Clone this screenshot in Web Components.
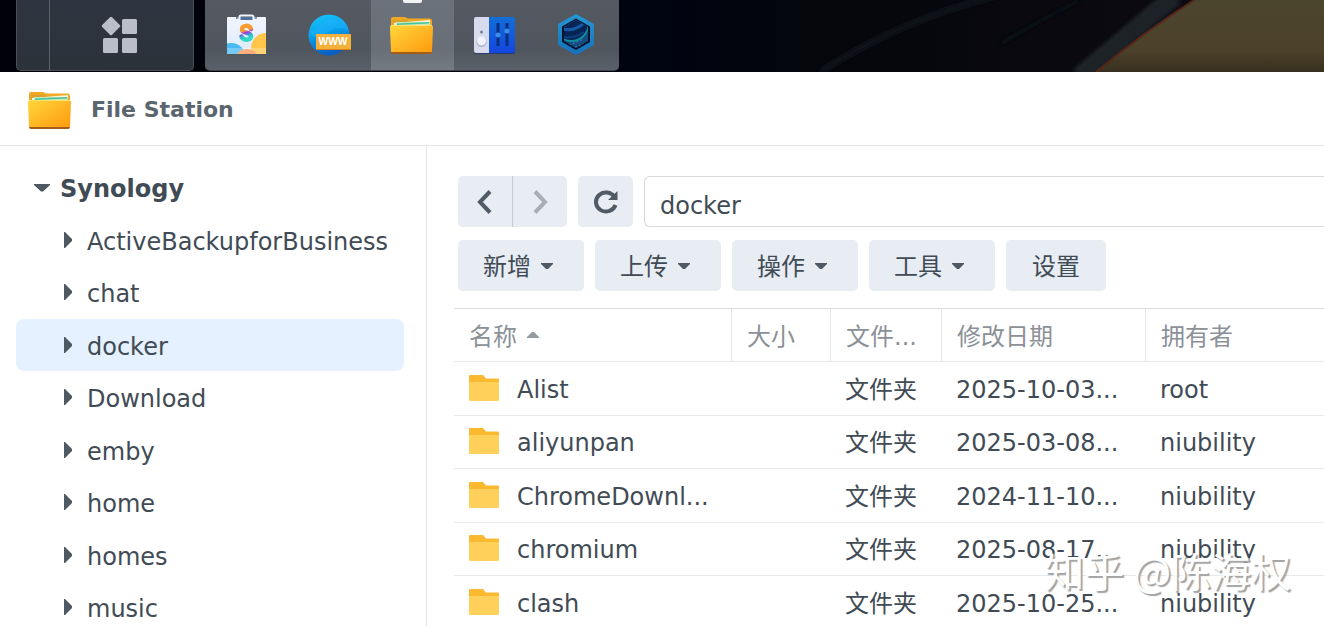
<!DOCTYPE html>
<html lang="zh-CN">
<head>
<meta charset="utf-8">
<title>File Station</title>
<style>
html, body { margin: 0; height: 100%; }
body { font: 24px/32px "DejaVu Sans", "Noto Sans CJK SC", sans-serif; color: #414b55; background: #fff; overflow: hidden; }
</style>
</head>
<body>
<fs-desktop>
  <fs-taskbar slot="taskbar"></fs-taskbar>
  <fs-titlebar slot="title">File Station</fs-titlebar>
  <fs-tree slot="side" label="Synology">
    <fs-tree-item>ActiveBackupforBusiness</fs-tree-item>
    <fs-tree-item>chat</fs-tree-item>
    <fs-tree-item selected>docker</fs-tree-item>
    <fs-tree-item>Download</fs-tree-item>
    <fs-tree-item>emby</fs-tree-item>
    <fs-tree-item>home</fs-tree-item>
    <fs-tree-item>homes</fs-tree-item>
    <fs-tree-item>music</fs-tree-item>
  </fs-tree>
  <fs-pathbar path="docker"></fs-pathbar>
  <fs-toolbar>
    <fs-button menu>新增</fs-button>
    <fs-button menu>上传</fs-button>
    <fs-button menu>操作</fs-button>
    <fs-button menu>工具</fs-button>
    <fs-button>设置</fs-button>
  </fs-toolbar>
  <fs-file-table></fs-file-table>
  <fs-watermark slot="overlay">知乎 @陈海权</fs-watermark>
</fs-desktop>

<script>
const define = (name, html, setup) => {
  const template = document.createElement('template');
  template.innerHTML = html;
  customElements.define(name, class extends HTMLElement {
    constructor() {
      super();
      this.attachShadow({ mode: 'open' }).append(template.content.cloneNode(true));
    }
    connectedCallback() { if (setup) setup(this, this.shadowRoot); }
  });
};

const appFolder = `<svg width="48" height="48" viewBox="0 0 48 48" aria-hidden="true">
  <defs>
    <linearGradient id="front" x1="0" y1="0" x2="1" y2="1"><stop offset="0" stop-color="#ffd83c"/><stop offset=".5" stop-color="#ffb726"/><stop offset="1" stop-color="#ff9a0c"/></linearGradient>
  </defs>
  <path d="M3 9Q3 7 5 7H17L20 8.500H42Q44 8.500 44 11V39H3Z" fill="#f0a722"/>
  <path d="M5 10H18L21 11H42V20H5Z" fill="#dba02e"/>
  <path d="M6 13L42 10V20H6Z" fill="#fff3d1"/>
  <path d="M8 12H42V20H8Z" fill="#c9e7b5"/>
  <path d="M9 13.500L41 12V13.500L9 15Z" fill="#43c2a0"/>
  <path d="M2 18Q2 15 4 15H43Q45 15 45 18L44 41Q44 43 42 43H5Q3 43 3 41Z" fill="url(#front)"/>
  <path d="M3 42H44Q44 44 42 44H5Q3 44 3 42Z" fill="#a45d16"/>
  <path d="M3 15.500H44" stroke="#ffe36c"/>
</svg>`;

define('fs-desktop', `
<style>
  :host { display: flex; flex-direction: column; min-height: 100%; position: relative; }
  .body { display: flex; flex: 1; }
  aside { flex: none; box-sizing: border-box; width: 427px; padding: 16px 22px 0 16px; border-right: 1px solid #e1e5e8; }
  main { flex: 1; min-width: 0; padding: 30px 0 0 27px; }
</style>
<slot name="taskbar"></slot>
<slot name="title"></slot>
<div class="body"><aside><slot name="side"></slot></aside><main><slot></slot></main></div>
<slot name="overlay"></slot>`);

define('fs-taskbar', `
<style>
  :host { display: block; position: relative; height: 72px; background: #020308; }
  .wall { position: absolute; inset: 0; width: 100%; height: 100%; }
  nav { position: relative; display: flex; gap: 11px; height: 71px; padding-left: 16px; }
  .group { display: flex; box-sizing: border-box; border-radius: 0 0 5px 5px; overflow: hidden; }
  .start { width: 178px; background: linear-gradient(#2f3540, #2b323a); border: 1px solid #4b5058; border-top: 0; }
  .apps { background: linear-gradient(#555a62, #50565e 70%, #596069); border-bottom: 1px solid #3f444b; }
  button { all: unset; display: grid; place-items: center; box-sizing: border-box; position: relative; }
  .show { width: 33px; border-right: 1px solid #5e636b; }
  .start .menu { flex: 1; padding-right: 3px; }
  .apps button { width: 83px; padding: 0 2px 2px 0; }
  .apps button:last-child { width: 82px; }
  .active { background: linear-gradient(#6c727b, #686f77 70%, #747b84); }
  .active::before { content: ""; position: absolute; top: 0; left: 32px; width: 19px; height: 3px; background: #f2f3f5; border-radius: 0 0 2px 2px; }
</style>
<svg class="wall" viewBox="0 0 1324 72" preserveAspectRatio="xMaxYMin slice" aria-hidden="true">
  <defs>
    <linearGradient id="sky"><stop offset="0" stop-color="#010208"/><stop offset=".5" stop-color="#010411"/><stop offset=".62" stop-color="#04060b"/><stop offset=".85" stop-color="#0b0a10"/></linearGradient>
    <linearGradient id="gold" x1="0" y1="0" x2="0" y2="1"><stop offset="0" stop-color="#4c452e"/><stop offset=".7" stop-color="#4c4129"/><stop offset="1" stop-color="#38301f"/></linearGradient>
    <filter id="soft"><feGaussianBlur stdDeviation="2"/></filter>
  </defs>
  <path d="M0 0H1324V72H0Z" fill="url(#sky)"/>
  <g filter="url(#soft)" fill="none">
    <path d="M820 72Q900 20 996 -4" stroke="#12191d" stroke-width="5"/>
    <path d="M1000 44Q1040 20 1080 0" stroke="#0f1217" stroke-width="3"/>
    <path d="M1080 76L1176 -4" stroke="#1a2125" stroke-width="18"/>
    <path d="M1074 72L1158 0" stroke="#293132" stroke-width="2"/>
  </g>
  <path d="M1097 72Q1145 32 1195 0H1324V72Z" fill="url(#gold)"/>
  <path d="M1096 72Q1144 32 1194 0" stroke="#592518" stroke-width="2" fill="none"/>
</svg>
<nav aria-label="Taskbar">
  <div class="group start">
    <button class="show" aria-label="Desktop"></button>
    <button class="menu" aria-label="Main menu">
      <svg width="40" height="40" viewBox="0 0 40 40" fill="#b9bec8"><rect x="4" y="4" width="14" height="14" rx="1.5" transform="rotate(45 11 11)"/><rect x="22" y="4" width="15" height="15" rx="1.5"/><rect x="3" y="23" width="15" height="15" rx="1.5"/><rect x="22" y="23" width="15" height="15" rx="1.5"/></svg>
    </button>
  </div>
  <div class="group apps">
    <button aria-label="Package Center">
      <svg width="48" height="48" viewBox="0 0 48 48">
        <defs><linearGradient id="ess" x1="0" y1="0" x2=".2" y2="1"><stop offset="0" stop-color="#ff9c2d"/><stop offset=".4" stop-color="#f29b38"/><stop offset=".55" stop-color="#a836dd"/><stop offset=".8" stop-color="#2bbdd0"/><stop offset="1" stop-color="#34d6c6"/></linearGradient>
        <linearGradient id="bag" x1="0" y1="0" x2="0" y2="1"><stop offset="0" stop-color="#f2f6fd"/><stop offset="1" stop-color="#dceafa"/></linearGradient><clipPath id="bagclip"><rect x="5" y="7" width="39" height="37" rx="1"/></clipPath></defs>
        <rect x="5" y="7" width="39" height="37" rx="1" fill="url(#bag)"/>
        <g clip-path="url(#bagclip)"><circle cx="44" cy="38" r="15" fill="#ffc64b"/><circle cx="9" cy="48" r="15" fill="#48b9f2"/><ellipse cx="25" cy="46" rx="10" ry="7" fill="#f89550"/><path d="M4 38H44V44H4Z" fill="#fff" opacity=".25"/></g>
        <path d="M14 7H35V9H14Z" fill="#7f99b5"/><path d="M18 7H31V10H18Z" fill="#4f7299"/><path d="M17.500 10V7Q17.500 5.500 19 5.500H30Q31.500 5.500 31.500 7V10" fill="none" stroke="#f2f7ff" stroke-width="2"/>
        <path d="M29 19C27.500 14.500 19.500 15 20 19.500C20.500 24 29 21.500 29 26.500C29 31 20.500 30.500 19.500 26.500" fill="none" stroke="url(#ess)" stroke-width="4.500" stroke-linecap="round"/>
      </svg>
    </button>
    <button aria-label="Web Station">
      <svg width="48" height="48" viewBox="0 0 48 48">
        <defs><linearGradient id="globe" x1="0" y1="0" x2=".3" y2="1"><stop offset="0" stop-color="#18c8fb"/><stop offset=".5" stop-color="#08a2ed"/><stop offset="1" stop-color="#075fc4"/></linearGradient></defs>
        <circle cx="24" cy="25" r="20.500" fill="url(#globe)"/><path d="M5 22Q15 17 18 13T34 8Q42 13 44 21Q35 16 28 19T13 30Z" fill="#28b3ff" opacity=".4"/>
        <rect x="11" y="26" width="35" height="14" fill="#db7f19"/><rect x="11" y="24" width="35" height="15" fill="#f3b13c"/>
        <text x="28" y="35" text-anchor="middle" font-family="Open Sans, sans-serif" font-size="10" font-weight="700" fill="#fff">WWW</text>
      </svg>
    </button>
    <button class="active" aria-label="File Station">${appFolder}</button>
    <button aria-label="Control Panel">
      <svg width="48" height="48" viewBox="0 0 48 48">
        <defs><linearGradient id="blue" x1="0" y1="0" x2="0" y2="1"><stop offset="0" stop-color="#126fd8"/><stop offset="1" stop-color="#1546df"/></linearGradient></defs>
        <rect x="3" y="8" width="41" height="36" rx="2" fill="#263c69"/><path d="M18 7H42Q44 7 44 9V41Q44 43 42 43H18Z" fill="url(#blue)"/><path d="M5 7H18V43H5Q3 43 3 41V9Q3 7 5 7Z" fill="#d7dbed"/>
        <circle cx="10.500" cy="32" r="5" fill="#a5abc5"/><circle cx="10.500" cy="31" r="4.500" fill="#eff2fb"/><circle cx="10.500" cy="22" r="1.500" fill="#78809d"/>
        <path d="M27 13V36M36 13V36" stroke="#082f80" stroke-width="3"/><circle cx="27" cy="25" r="2.500" fill="#3e8dec"/><circle cx="36" cy="21" r="2.500" fill="#3e8dec"/>
      </svg>
    </button>
    <button aria-label="Virtual Machine Manager">
      <svg width="48" height="48" viewBox="0 0 48 48">
        <defs><linearGradient id="hex" x1="0" y1="0" x2="0" y2="1"><stop offset="0" stop-color="#2596d4"/><stop offset="1" stop-color="#1571bb"/></linearGradient><clipPath id="win"><path d="M23 10L35 17V31L23 38L11 31V17Z"/></clipPath></defs>
        <path d="M23 5L40 14.500V34.500L23 44L6 34.500V14.500Z" fill="url(#hex)" stroke="url(#hex)" stroke-width="2" stroke-linejoin="round"/><path d="M23 8.500L37 16.500V32L23 40L9 32V16.500Z" fill="#061229"/>
        <g clip-path="url(#win)"><path d="M9 8H37V42H9Z" fill="#164a80"/><circle cx="19" cy="15" r="17" fill="#0f8c9d"/><circle cx="18" cy="13" r="17" fill="#082456"/><path d="M10 19Q22 22 32 12" fill="none" stroke="#155aa5" stroke-width="3"/><path d="M10 27Q20 29 31 22" fill="none" stroke="#0c427e" stroke-width="2"/><path d="M16 35L31 29M22 37L34 33" stroke="#3686bb" stroke-dasharray="2 2"/></g>
      </svg>
    </button>
  </div>
</nav>`);

define('fs-titlebar', `
<style>
  :host { display: block; border-bottom: 1px solid #e4e7ea; }
  header { display: flex; align-items: center; gap: 17px; height: 73px; padding-left: 26px; }
  h1 { margin: 0; padding-top: 2px; font-size: 22px; line-height: 32px; font-weight: 700; color: #5b656e; }
</style>
<header>${appFolder}<h1><slot></slot></h1></header>`);

define('fs-tree', `
<style>
  :host { display: block; }
  h2 { display: flex; align-items: center; gap: 10px; box-sizing: border-box; height: 52px; margin: 0; padding-left: 18px; font-size: 24px; font-weight: 700; color: #414b55; }
  span { padding-top: 2px; }
  div { display: grid; grid-auto-rows: 52px 53px; }
</style>
<h2><svg width="16" height="8" viewBox="0 0 16 8" aria-hidden="true"><path d="M0 0H16V1L9 7.500H7L0 1Z" fill="#4f5963"/></svg><span></span></h2>
<div role="tree"><slot></slot></div>`, (el, root) => { root.querySelector('span').textContent = el.getAttribute('label'); });

define('fs-tree-item', `
<style>
  :host { display: block; }
  a { display: flex; align-items: center; gap: 15px; box-sizing: border-box; height: 52px; padding-left: 48px; border-radius: 8px; color: #414b55; text-decoration: none; }
  :host([selected]) a { background: #e5f1fe; }
  span { padding-top: 4px; }
</style>
<a href="#" role="treeitem"><svg width="8" height="16" viewBox="0 0 8 16" aria-hidden="true"><path d="M0 0H1L8 7V9L1 16H0Z" fill="#4f5963"/></svg><span><slot></slot></span></a>`);

define('fs-pathbar', `
<style>
  :host { display: flex; gap: 11px; padding-left: 4px; }
  button { all: unset; display: grid; place-items: center; box-sizing: border-box; width: 55px; height: 51px; background: #e8ecf3; border-radius: 5px; }
  .pair { display: flex; }
  .pair button:first-child { border-radius: 5px 0 0 5px; border-right: 1px solid #c5cad3; }
  .pair button:last-child { width: 54px; border-radius: 0 5px 5px 0; }
  input { flex: 1; min-width: 0; box-sizing: border-box; height: 51px; margin: 0; padding: 8px 15px 0; border: 1px solid #d5dadd; border-right: 0; border-radius: 6px 0 0 6px; font: inherit; color: inherit; outline: none; background: #fff; }
</style>
<div class="pair">
  <button aria-label="Back"><svg width="24" height="24" viewBox="0 0 24 24" fill="none" stroke="#515b65" stroke-width="4"><path d="M17 1.500L7 12L17 22.500"/></svg></button>
  <button aria-label="Forward" disabled><svg width="24" height="24" viewBox="0 0 24 24" fill="none" stroke="#a9aeb6" stroke-width="4"><path d="M7 1.500L17 12L7 22.500"/></svg></button>
</div>
<button aria-label="Refresh"><svg width="24" height="24" viewBox="0 0 24 24"><path d="M20.500 7A10 9.500 0 1 0 21.500 15" fill="none" stroke="#515b65" stroke-width="4"/><path d="M23.500 1V10H14Z" fill="#515b65"/></svg></button>
<input type="text" aria-label="Path">`, (el, root) => { root.querySelector('input').value = el.getAttribute('path'); });

define('fs-toolbar', `
<style>:host { display: flex; gap: 11px; padding: 13px 0 17px 4px; }</style>
<slot></slot>`);

define('fs-button', `
<style>
  :host { display: block; }
  button { all: unset; display: flex; align-items: center; justify-content: center; gap: 10px; box-sizing: border-box; width: 100px; height: 51px; padding-top: 3px; border-radius: 5px; background: #e8ecf3; }
  :host([menu]) button { width: 126px; padding-right: 6px; }
  svg { display: none; margin-bottom: 2px; }
  :host([menu]) svg { display: block; }
</style>
<button><slot></slot><svg width="12" height="6" viewBox="0 0 12 6" aria-hidden="true"><path d="M0 0H12V1L7 6H5L0 1Z" fill="#4f5963"/></svg></button>`);

define('fs-file-table', `
<style>
  :host { display: block; }
  table { width: 100%; table-layout: fixed; border-collapse: separate; border-spacing: 0; border-top: 1px solid #d9dee1; }
  th, td { box-sizing: border-box; padding: 2px 0 0 14px; border-bottom: 1px solid #e6eaec; text-align: left; font-weight: 400; white-space: nowrap; overflow: hidden; }
  th { height: 53px; padding: 4px 0 0 15px; color: #8b9197; border-right: 1px solid #e4e8eb; }
  th:last-child { border-right: 0; }
  td { height: 54px; }
  td:first-child { padding-left: 15px; }
  tr:nth-child(even) td { height: 53px; }
  .name { width: 278px; } .size { width: 99px; } .kind { width: 111px; } .date { width: 204px; }
  .cell { display: flex; align-items: center; gap: 18px; }
  .sort { gap: 10px; }
  .cell svg { flex: none; margin-bottom: 4px; }
</style>
<table>
  <thead><tr>
    <th class="name" aria-sort="ascending"><div class="cell sort">名称<svg width="12" height="6" viewBox="0 0 12 6" aria-hidden="true"><path d="M0 6H12V5L7 0H5L0 5Z" fill="#959aa0"/></svg></div></th>
    <th class="size">大小</th><th class="kind">文件...</th><th class="date">修改日期</th><th>拥有者</th>
  </tr></thead>
  <tbody></tbody>
</table>`, (el, root) => {
  const files = [
    ['Alist', '2025-10-03...', 'root'],
    ['aliyunpan', '2025-03-08...', 'niubility'],
    ['ChromeDownl...', '2024-11-10...', 'niubility'],
    ['chromium', '2025-08-17...', 'niubility'],
    ['clash', '2025-10-25...', 'niubility'],
  ];
  const folder = '<svg width="30" height="26" viewBox="0 0 30 26" aria-hidden="true"><path d="M0 1Q0 0 1 0H14L17 3.500H29Q30 3.500 30 4.500V12H0Z" fill="#fbb930"/><path d="M0 7H30V25Q30 26 29 26H1Q0 26 0 25Z" fill="#ffd05a"/></svg>';
  root.querySelector('tbody').innerHTML = files.map(([name, date, owner]) =>
    `<tr><td><div class="cell">${folder}<span>${name}</span></div></td><td></td><td>文件夹</td><td>${date}</td><td>${owner}</td></tr>`).join('');
});

define('fs-watermark', `
<style>
  :host { position: absolute; right: 33px; bottom: 40px; font: 40px/48px "Noto Sans CJK SC", sans-serif; color: #fff; text-shadow: 2px 2px 1px #a4a4a4; white-space: nowrap; pointer-events: none; }
</style>
<slot></slot>`);
</script>
</body>
</html>
